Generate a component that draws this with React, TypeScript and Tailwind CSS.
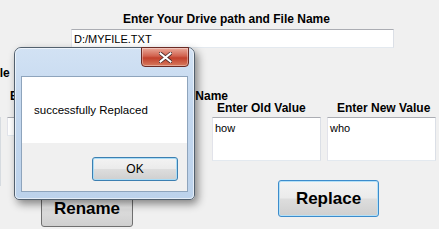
import React from "react";

const winBtn =
  "flex items-center justify-center rounded-[3px] border bg-[linear-gradient(#f3f3f3_0%,#ebebeb_48%,#dddddd_52%,#cfcfcf_100%)] text-black";

function TextBox({ className = "", children }: { className?: string; children?: React.ReactNode }) {
  return (
    <div
      className={`border border-[#abadb3] border-l-[#e2e3ea] border-r-[#dbdfe6] border-b-[#e3e9ef] bg-white text-[11px] leading-[13px] text-black ${className}`}
    >
      {children}
    </div>
  );
}

function MessageBox() {
  return (
    <div className="absolute left-[14px] top-[47px] h-[153px] w-[181px] rounded-t-[7px] rounded-b-[5px] border border-[#52606e] bg-[linear-gradient(#d2e2f4,#c3d7ee_40%,#bcd2eb)] shadow-[3px_4px_9px_rgba(0,0,0,0.45)]">
      <div className="absolute inset-0 rounded-t-[6px] rounded-b-[4px] border border-white/60" />
      {/* close button */}
      <div className="absolute right-[5px] top-[-1px] flex h-[20px] w-[48px] items-center justify-center rounded-b-[4px] border border-[#6b2a24] bg-[linear-gradient(#e9a99a,#d1624f_45%,#c2402c_55%,#d77a5e)] shadow-[inset_0_0_0_1px_rgba(255,255,255,0.35)]">
        <svg width="13" height="11" viewBox="0 0 13 11">
          <path
            d="M1.5 1.5 L11.5 9.5 M11.5 1.5 L1.5 9.5"
            stroke="#4a2a28"
            strokeWidth="3.6"
            strokeLinecap="square"
          />
          <path
            d="M1.5 1.5 L11.5 9.5 M11.5 1.5 L1.5 9.5"
            stroke="#ffffff"
            strokeWidth="2"
            strokeLinecap="square"
          />
        </svg>
      </div>
      <div className="flex h-full flex-col px-[6px] pb-[7px] pt-[28px]">
        <div className="flex flex-1 flex-col border border-[#8ea4bc]">
          <div className="flex h-[66px] items-center bg-white pl-[12px] pt-[2px] text-[11.5px] text-black">
            successfully Replaced
          </div>
          <div className="flex flex-1 bg-[#f0f0f0] pl-[70px] pt-[14px]">
            <button
              className={`${winBtn} h-[24px] w-[86px] border-[#3c7fb1] text-[12px] shadow-[inset_0_0_0_1px_#a9dcf6]`}
            >
              OK
            </button>
          </div>
        </div>
      </div>
    </div>
  );
}

export default function App() {
  return (
    <div className="relative h-[229px] w-[439px] overflow-hidden bg-[#f0f0f0] font-['Liberation_Sans',Arial,sans-serif] text-black">
      <div className="pl-[123px] pt-[12px] text-[12px] font-bold leading-[14px]">
        Enter Your Drive path and File Name
      </div>
      <TextBox className="ml-[71px] mt-[3px] h-[19px] w-[323px] pl-[2px] pt-[3px]">D:/MYFILE.TXT</TextBox>

      <div className="flex">
        {/* left group: rename */}
        <div className="w-[212px] shrink-0">
          <div className="-ml-[11px] mt-[18px] text-[12px] font-bold leading-[14px]">File</div>
          <div className="mt-[9px] flex w-[228px] justify-between whitespace-nowrap pl-[10px] text-[12px] font-bold leading-[14px]">
            <span>Enter Old Name</span>
            <span>Enter New File Name</span>
          </div>
          <div className="mt-[14px] h-[69px] border-l border-[#d6dbe0]">
            <div className="flex gap-[10px] pl-[6px]">
              <TextBox className="h-[19px] w-[100px]" />
              <TextBox className="h-[19px] w-[72px]" />
            </div>
          </div>
          <button
            className={`${winBtn} ml-[41px] mt-[4px] h-[37px] w-[92px] border-[#707070] text-[17px] font-bold`}
          >
            Rename
          </button>
        </div>

        {/* right group: replace */}
        <div className="pt-[53px]">
          <div className="flex gap-[6px]">
            <div className="w-[109px]">
              <div className="whitespace-nowrap pl-[5px] text-[12px] font-bold leading-[14px]">Enter Old Value</div>
              <TextBox className="mt-[2px] h-[44px] w-[109px] pl-[2px] pt-[4px]">how</TextBox>
            </div>
            <div className="w-[109px]">
              <div className="whitespace-nowrap pl-[10px] text-[12px] font-bold leading-[14px]">Enter New Value</div>
              <TextBox className="mt-[2px] h-[44px] w-[109px] pl-[2px] pt-[4px]">who</TextBox>
            </div>
          </div>
          <button
            className={`${winBtn} ml-[66px] mt-[19px] h-[37px] w-[101px] border-[#3c8ccc] text-[17px] font-bold shadow-[inset_0_0_0_1px_#b4e0f7]`}
          >
            Replace
          </button>
        </div>
      </div>

      <MessageBox />
    </div>
  );
}
